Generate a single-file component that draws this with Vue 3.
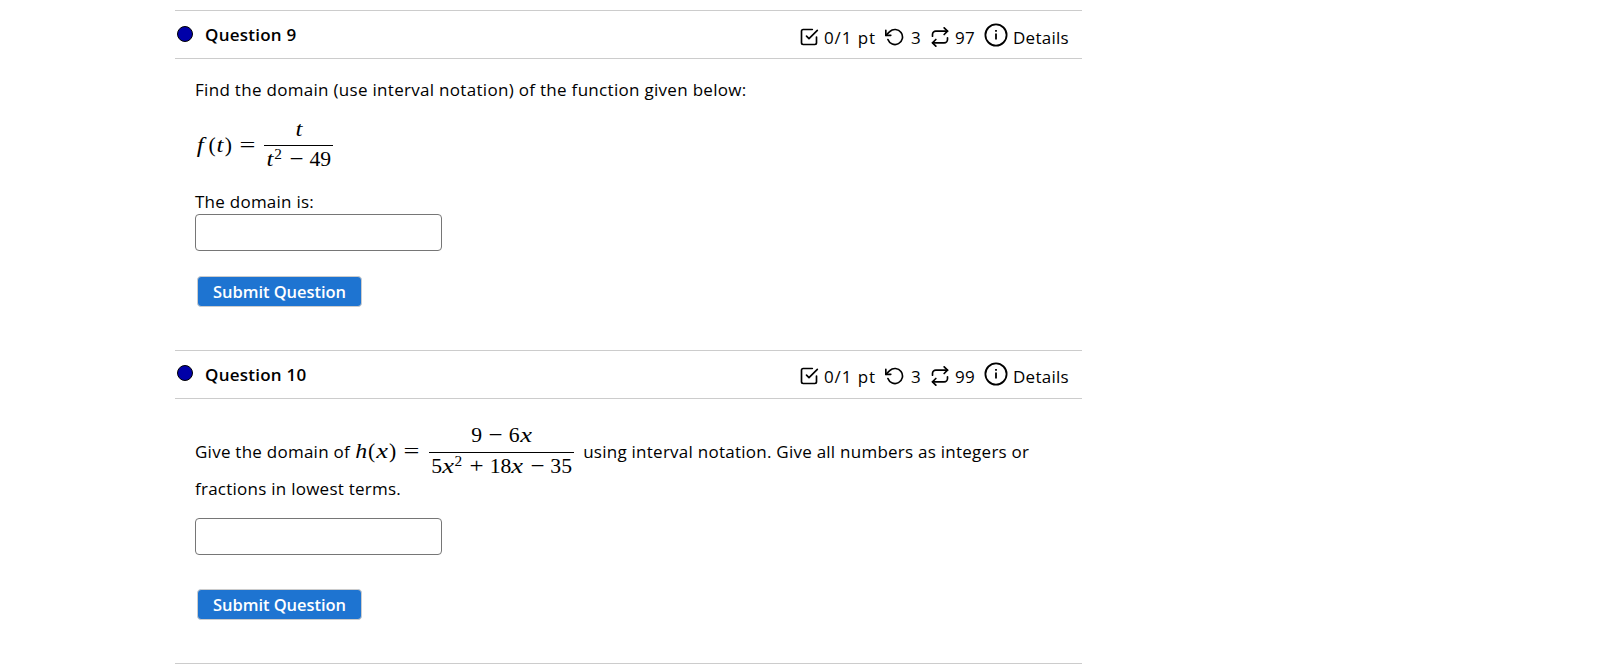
<script setup>
import { ref } from 'vue';

const preguntas = ref([
  { id: 9, puntos: '0/1 pt', intentos: 3, versiones: 97, respuesta: '' },
  { id: 10, puntos: '0/1 pt', intentos: 3, versiones: 99, respuesta: '' },
]);
</script>

<template>
  <div class="assessment">
    <section v-for="p in preguntas" :key="p.id" :class="['question', 'question-' + p.id]">
      <header class="header">
        <span class="dot"></span>
        <h2>Question {{ p.id }}</h2>

        <div class="meta">
          <svg class="icon" viewBox="0 0 24 24">
            <polyline points="9 11 12 14 22 4" />
            <path d="M21 12v7a2 2 0 0 1-2 2H5a2 2 0 0 1-2-2V5a2 2 0 0 1 2-2h11" />
          </svg>
          <span class="points">{{ p.puntos }}</span>
          <svg class="icon" viewBox="0 0 24 24">
            <polyline points="1 4 1 10 7 10" />
            <path d="M3.51 15a9 9 0 1 0 2.13-9.36L1 10" />
          </svg>
          <span class="tries">{{ p.intentos }}</span>
          <svg class="icon" viewBox="0 0 24 24">
            <polyline points="17 1 21 5 17 9" />
            <path d="M3 11V9a4 4 0 0 1 4-4h14" />
            <polyline points="7 23 3 19 7 15" />
            <path d="M21 13v2a4 4 0 0 1-4 4H3" />
          </svg>
          <span class="versions">{{ p.versiones }}</span>
          <svg class="icon-info" viewBox="0 0 24 24">
            <circle cx="12" cy="12" r="10.6" />
            <path d="M12 10.5v6M12 7v1.8" />
          </svg>
          <span class="details">Details</span>
        </div>
      </header>

      <div class="body">
        <template v-if="p.id === 9">
          <p class="intro">Find the domain (use interval notation) of the function given below:</p>
          <div class="formula">
            <span class="math lhs"><i class="f">f</i><b>(</b><i class="t">t</i><b>)</b><span class="rel">=</span></span>
            <span class="frac">
              <span class="math num"><i class="t">t</i></span>
              <span class="math den"><i class="t">t</i><sup>2</sup><span class="op">−</span>49</span>
            </span>
          </div>
          <p class="label">The domain is:</p>
        </template>

        <template v-else>
          <div class="formula">
            <span class="text give">Give the domain of</span>
            <span class="math lhs"><i class="h">h</i><b>(</b><i class="x">x</i><b>)</b><span class="rel">=</span></span>
            <span class="frac">
              <span class="math num">9<span class="op">−</span>6<i class="x">x</i></span>
              <span class="math den">5<i class="x">x</i><sup>2</sup><span class="op">+</span>18<i class="x">x</i><span class="op">−</span>35</span>
            </span>
            <span class="text using">using interval notation. Give all numbers as integers or</span>
          </div>
          <p class="rest">fractions in lowest terms.</p>
        </template>

        <input v-model="p.respuesta" type="text" class="answer" />
        <button class="btn-submit">Submit Question</button>
      </div>
    </section>
  </div>
</template>

<style>
body {
  background-color: #fff;
}
</style>

<style scoped>
.assessment {
  width: 907px;
  margin-left: 175px;
  padding-top: 10px;
  font-family: 'Trebuchet MS', 'Open Sans', sans-serif;
  font-size: 17px;
  line-height: 24px;
  letter-spacing: 0.25px;
  color: #000;
}

.question {
  box-sizing: border-box;
  height: 340px;
}

.question-10 {
  height: 314px;
  border-bottom: 1px solid #ccc;
}

.header {
  display: flex;
  box-sizing: border-box;
  height: 49px;
  border-top: 1px solid #ccc;
  border-bottom: 1px solid #ccc;
}

.dot {
  box-sizing: border-box;
  width: 16px;
  height: 16px;
  margin: 15px 12px 0 2px;
  border: 1px solid #000;
  border-radius: 50%;
  background-color: #0000a8;
}

.question-10 .dot {
  margin-top: 14px;
}

.header h2 {
  margin: 12px 0 0;
  font-size: 17px;
  font-weight: 600;
}

.meta {
  display: flex;
  width: 283px;
  margin: 15px 0 0 auto;
}

.question-10 .meta {
  margin-top: 14px;
}

.icon {
  flex: none;
  width: 20px;
  height: 20px;
  margin-top: 1px;
  fill: none;
  stroke: #000;
  stroke-width: 2;
  stroke-linecap: round;
  stroke-linejoin: round;
}

.icon-info {
  flex: none;
  width: 24px;
  height: 24px;
  margin: -3px 0 0 1px;
  fill: none;
  stroke: #000;
  stroke-width: 1.8;
}

.points {
  width: 61px;
  padding-left: 5px;
  letter-spacing: 0.9px;
}

.tries {
  width: 19px;
  padding-left: 6px;
}

.versions {
  width: 28px;
  padding-left: 5px;
}

.details {
  padding-left: 5px;
}

.points,
.tries,
.versions {
  flex: none;
}

.body {
  display: flex;
  flex-direction: column;
  align-items: flex-start;
  padding: 19px 20px 0;
}

.question-10 .body {
  padding-top: 18px;
}

.body p {
  margin: 0;
  white-space: nowrap;
}

.body .intro {
  letter-spacing: 0.3px;
}

.text {
  margin-top: 17px;
  white-space: nowrap;
}

.formula {
  display: flex;
  align-items: flex-start;
  margin-top: 15px;
}

.question-10 .formula {
  margin-top: 6px;
}

.give {
  width: 160px;
}

.using {
  margin-left: 9px;
}

.label {
  padding-top: 19px;
}

/* formulas */
.math {
  display: flex;
  height: 24px;
  font-family: 'Liberation Serif', serif;
  font-size: 21.7px;
  line-height: 24px;
  letter-spacing: 0;
}

.math i {
  text-align: center;
}

.math b {
  width: 0.389em;
  font-weight: normal;
  text-align: center;
}

.math .f {
  width: 0.598em;
  text-indent: -2px;
  transform: scaleX(1.15);
}

.math .t {
  width: 0.361em;
  transform: scaleX(1.15);
}

.math .h {
  width: 0.576em;
  transform: scaleX(1.1);
}

.math .x {
  width: 0.572em;
  transform: scaleX(1.22);
}

.math sup {
  width: 0.57em;
  font-size: 0.707em;
  line-height: 14px;
}

.rel,
.op {
  width: 0.778em;
  margin: 0 0.278em;
  text-align: center;
  transform: scaleX(1.3);
}

.op {
  margin: 0 0.222em;
  transform: scaleX(1.15);
}

.lhs {
  margin-top: 16px;
}

.frac {
  margin-left: 0.15em;
}

.question-10 .frac {
  margin-left: 0.2em;
}

.num {
  justify-content: center;
  height: 28px;
  border-bottom: 1px solid #000;
}

.den {
  padding: 1px 0.1em 0;
}

.question-10 .num {
  height: 29px;
}

.question-10 .rest {
  margin-top: -1px;
}

.answer {
  box-sizing: border-box;
  width: 247px;
  height: 37px;
  padding: 4px 8px;
  border: 1px solid #767676;
  border-radius: 4px;
  background-color: #fff;
  font: inherit;
}

.question-10 .answer {
  margin-top: 17px;
}

.btn-submit {
  box-sizing: border-box;
  width: 165px;
  height: 31px;
  margin: 25px 0 0 2px;
  padding: 0;
  border: 1px solid #ccc;
  border-radius: 4px;
  background-color: #1e74d1;
  color: #fff;
  font: inherit;
  font-size: 16.5px;
  font-weight: 600;
  letter-spacing: -0.05px;
  cursor: pointer;
}

.question-10 .btn-submit {
  margin-top: 34px;
}
</style>
